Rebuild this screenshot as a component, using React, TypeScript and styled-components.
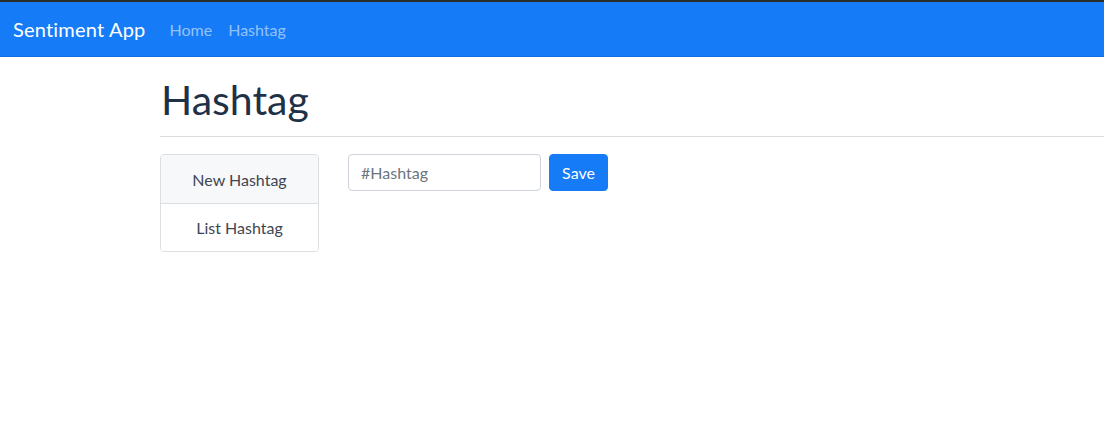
import React from "react";
import styled, { createGlobalStyle } from "styled-components";

const Global = createGlobalStyle`
  html, body { margin: 0; padding: 0; background: #fff; }
  body { font-family: Lato, "Noto Sans", "Liberation Sans", sans-serif; }
  * { box-sizing: border-box; }
`;

const TopEdge = styled.div`
  height: 2px;
  background: #2b2b2b;
`;

const Navbar = styled.nav`
  height: 55px;
  background: #167bf6;
  border-bottom: 1px solid #0f6ee0;
  display: flex;
  align-items: center;
  padding: 0 13px;
`;

const Brand = styled.span`
  color: #fff;
  font-size: 20px;
  margin-right: 24px;
  letter-spacing: 0.2px;
`;

const NavLink = styled.span`
  color: rgba(255, 255, 255, 0.55);
  font-size: 16px;
  margin-right: 16px;
`;

const Main = styled.main`
  padding-left: 160px;
`;

const Title = styled.h1`
  margin: 0;
  padding: 18px 0 11px 1px;
  font-size: 41px;
  font-weight: 400;
  color: #1f3147;
  line-height: 50px;
`;

const Rule = styled.hr`
  margin: 0;
  border: 0;
  border-top: 1px solid #dcdcdc;
`;

const Row = styled.div`
  display: flex;
  align-items: flex-start;
  padding-top: 17px;
`;

const ListGroup = styled.div`
  width: 159px;
  border: 1px solid #dcdfe3;
  border-radius: 4px;
  overflow: hidden;
  margin-right: 29px;
`;

const ListItem = styled.div<{ $active?: boolean }>`
  height: 48px;
  display: flex;
  align-items: center;
  justify-content: center;
  font-size: 16px;
  color: #3f4650;
  background: ${(p) => (p.$active ? "#f7f8fa" : "#fff")};
  & + & { border-top: 1px solid #dcdfe3; }
`;

const Form = styled.form`
  display: flex;
  gap: 8px;
`;

const Input = styled.input`
  width: 193px;
  height: 37px;
  border: 1px solid #ced4da;
  border-radius: 4px;
  padding: 0 12px;
  font-family: inherit;
  font-size: 16px;
  color: #495057;
  &::placeholder { color: #6c757d; }
`;

const Button = styled.button`
  width: 59px;
  height: 37px;
  border: 1px solid #167bf6;
  border-radius: 4px;
  background: #167bf6;
  color: #fff;
  font-family: inherit;
  font-size: 16px;
  padding: 0;
`;

export default function App() {
  return (
    <>
      <Global />
      <TopEdge />
      <Navbar>
        <Brand>Sentiment App</Brand>
        <NavLink>Home</NavLink>
        <NavLink>Hashtag</NavLink>
      </Navbar>
      <Main>
        <Title>Hashtag</Title>
        <Rule />
        <Row>
          <ListGroup>
            <ListItem $active>New Hashtag</ListItem>
            <ListItem>List Hashtag</ListItem>
          </ListGroup>
          <Form onSubmit={(e) => e.preventDefault()}>
            <Input placeholder="#Hashtag" />
            <Button type="submit">Save</Button>
          </Form>
        </Row>
      </Main>
    </>
  );
}
